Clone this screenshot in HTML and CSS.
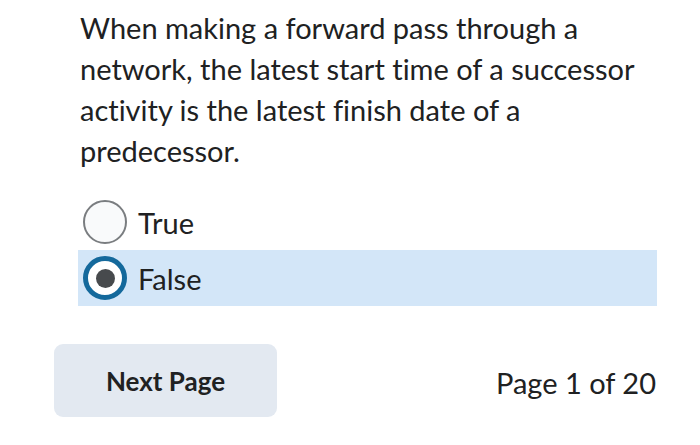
FILE: index.html
```html
<!DOCTYPE html>
<html>
<head>
<meta charset="utf-8">
<link rel="stylesheet" href="styles.css">
</head>
<body>
<div class="page">
  <p class="question">When making a forward pass through a network, the latest start time of a successor activity is the latest finish date of a predecessor.</p>
  <div class="options">
    <label class="option">
      <span class="radio"></span>
      <span class="label">True</span>
    </label>
    <label class="option selected">
      <span class="radio checked"><span class="dot"></span></span>
      <span class="label">False</span>
    </label>
  </div>
  <div class="footer">
    <button class="next">Next Page</button>
    <span class="pager">Page 1 of 20</span>
  </div>
</div>
</body>
</html>
```
FILE: styles.css
```css
html, body {
  margin: 0;
  padding: 0;
  background: #ffffff;
}
body {
  font-family: Lato, "Noto Sans", sans-serif;
  font-variant-ligatures: none;
  color: #202122;
  width: 700px;
  height: 445px;
  overflow: hidden;
}
.page {
  padding: 7px 0 0 54px;
}
.question {
  margin: 0 0 0 26px;
  width: 585px;
  font-size: 29px;
  line-height: 41px;
}
.options {
  margin: 23px 0 0 24px;
  width: 579px;
  display: flex;
  flex-direction: column;
}
.option {
  display: flex;
  align-items: center;
  height: 56px;
  padding-left: 5px;
  gap: 11px;
  font-size: 29px;
}
.option.selected {
  background: #d3e6f8;
}
.radio {
  box-sizing: border-box;
  width: 44px;
  height: 44px;
  border-radius: 50%;
  border: 2px solid #7a7d80;
  background: #f9fafb;
  display: flex;
  align-items: center;
  justify-content: center;
}
.radio.checked {
  border: 5px solid #14699c;
  background: #ffffff;
}
.dot {
  width: 19px;
  height: 19px;
  border-radius: 50%;
  background: #474a4d;
}
.footer {
  margin-top: 38px;
  width: 602px;
  display: flex;
  align-items: center;
  justify-content: space-between;
}
.next {
  width: 223px;
  height: 73px;
  border: none;
  border-radius: 9px;
  background: #e3e9f1;
  font-family: Lato, "Noto Sans", sans-serif;
  font-variant-ligatures: none;
  font-weight: bold;
  font-size: 26px;
  color: #202122;
  padding: 0;
}
.pager {
  font-size: 29px;
  padding-top: 3px;
}
```
